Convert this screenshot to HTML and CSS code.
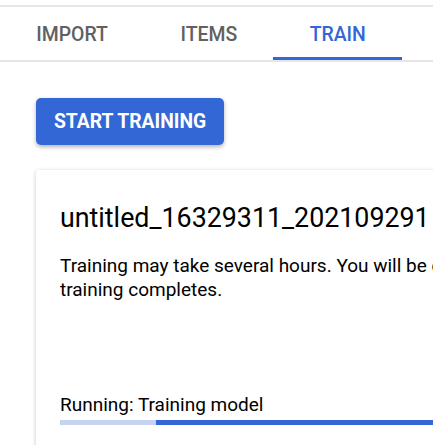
FILE: index.html
```html
<!DOCTYPE html>
<html>
<head>
<meta charset="utf-8">
<link rel="stylesheet" href="styles.css">
</head>
<body>
<div class="topline"></div>
<nav class="tabs">
  <div class="tab">IMPORT</div>
  <div class="tab">ITEMS</div>
  <div class="tab active">TRAIN</div>
</nav>
<main class="main">
  <button class="btn">START TRAINING</button>
  <section class="card">
    <h1 class="title">untitled_16329311_202109291</h1>
    <p class="desc">Training may take several hours. You will be emailed when training completes.</p>
    <div class="status">Running: Training model</div>
    <div class="progress"><div class="progress-buf" style="width:96px"></div><div class="progress-bar"></div></div>
  </section>
</main>
</body>
</html>
```

FILE: styles.css
```css
html, body {
  margin: 0;
  padding: 0;
  background: #fff;
  overflow: hidden;
}
body {
  font-family: Roboto, "Noto Sans", Arial, sans-serif;
  color: #202124;
  width: 433px;
  height: 445px;
}
.topline {
  height: 5px;
  border-bottom: 2px solid #e6e6e6;
}
.tabs {
  display: flex;
  height: 53px;
  border-bottom: 2px solid #e6e6e6;
}
.tab {
  padding: 0 36.3px;
  display: flex;
  align-items: center;
  font-size: 19.4px;
  font-weight: 500;
  color: #616161;
  box-sizing: border-box;
  border-bottom: 3px solid transparent;
  padding-top: 4px;
}
.tab.active {
  color: #3367d6;
  border-bottom-color: #3367d6;
}
.main {
  padding: 36px 0 0 36px;
}
.btn {
  display: block;
  height: 47px;
  padding: 0 18px;
  border: none;
  border-radius: 5px;
  background: #3367d6;
  color: #fff;
  font-family: Roboto, Arial, sans-serif;
  font-size: 19.3px;
  font-weight: 700;
  box-shadow: 0 2px 4px rgba(0,0,0,0.3);
}
.card {
  margin-top: 25px;
  width: 600px;
  height: 320px;
  padding: 32px 24px 0 24px;
  box-shadow: 0 1px 4px rgba(0,0,0,0.22);
  border-radius: 3px;
}
.title {
  margin: 0;
  font-size: 26.8px;
  line-height: 32px;
  font-weight: 400;
  color: #000;
}
.desc {
  margin: 20px 0 0 0;
  width: 510px;
  font-size: 19px;
  line-height: 24px;
  color: #000;
}
.status {
  margin-top: 91px;
  font-size: 19px;
  line-height: 24px;
  color: #000;
}
.progress {
  margin-top: 3px;
  height: 5px;
  display: flex;
  background: #c6d4f1;
}
.progress-buf {
  background: #c6d4f1;
}
.progress-bar {
  flex: 1;
  background: #3367d6;
}
```
